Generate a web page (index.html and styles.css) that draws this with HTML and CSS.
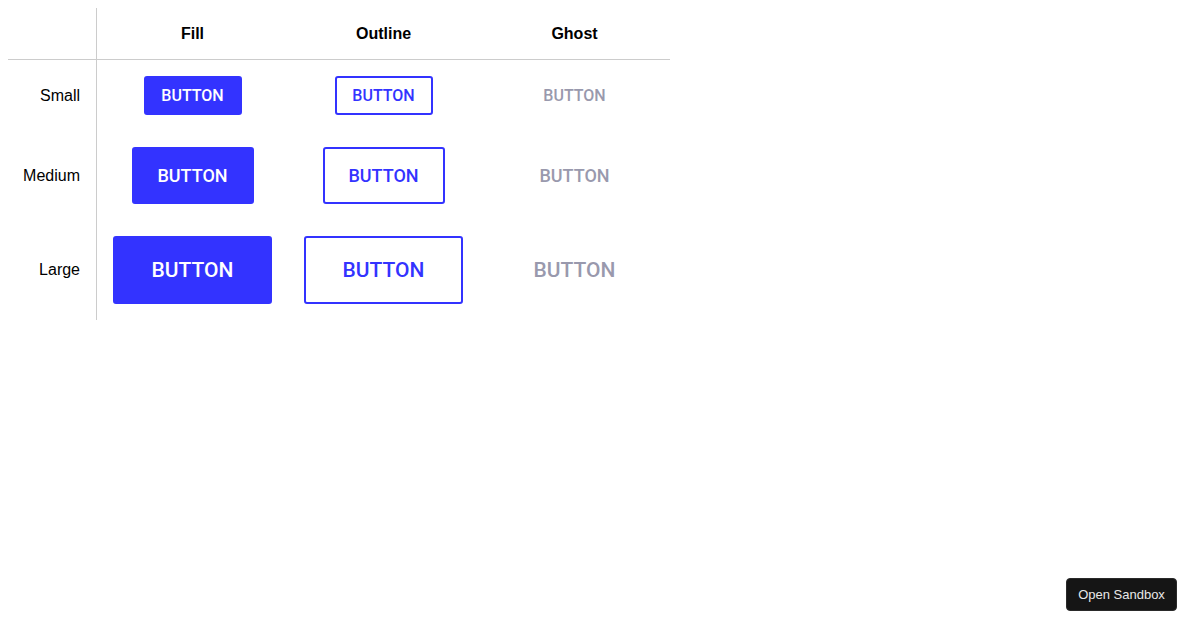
FILE: index.html
```html
<!DOCTYPE html>
<html>
<head>
<meta charset="utf-8">
<link rel="stylesheet" href="styles.css">
</head>
<body>
<div class="matrix">
  <div class="corner"></div>
  <div class="head">Fill</div>
  <div class="head">Outline</div>
  <div class="head">Ghost</div>

  <div class="label row-sm">Small</div>
  <div class="cell row-sm"><button class="btn fill sm">BUTTON</button></div>
  <div class="cell row-sm"><button class="btn outline sm">BUTTON</button></div>
  <div class="cell row-sm"><button class="btn ghost sm">BUTTON</button></div>

  <div class="label row-md">Medium</div>
  <div class="cell row-md"><button class="btn fill md">BUTTON</button></div>
  <div class="cell row-md"><button class="btn outline md">BUTTON</button></div>
  <div class="cell row-md"><button class="btn ghost md">BUTTON</button></div>

  <div class="label row-lg">Large</div>
  <div class="cell row-lg"><button class="btn fill lg">BUTTON</button></div>
  <div class="cell row-lg"><button class="btn outline lg">BUTTON</button></div>
  <div class="cell row-lg"><button class="btn ghost lg">BUTTON</button></div>
</div>
<button class="sandbox">Open Sandbox</button>
</body>
</html>
```

FILE: styles.css
```css
body {
  margin: 8px;
  font-family: "Liberation Sans", Arial, sans-serif;
  background: #fff;
  color: #000;
}
.matrix {
  display: grid;
  grid-template-columns: 89px repeat(3, 191px);
  grid-template-rows: 52px 71px 89px 100px;
  width: 662px;
}
.corner, .head {
  border-bottom: 1px solid #cccccc;
}
.corner, .label {
  border-right: 1px solid #cccccc;
}
.head {
  display: flex;
  align-items: center;
  justify-content: center;
  font-weight: bold;
  font-size: 16px;
}
.label {
  display: flex;
  align-items: center;
  justify-content: flex-end;
  padding-right: 16px;
  font-size: 16px;
}
.cell {
  display: flex;
  align-items: center;
  justify-content: center;
}
.btn {
  font-family: Roboto, "Noto Sans", sans-serif;
  font-weight: 500;
  border: 2px solid transparent;
  border-radius: 3px;
  display: inline-flex;
  align-items: center;
  justify-content: center;
  box-sizing: border-box;
  cursor: pointer;
  padding: 0;
}
.btn.sm { font-size: 16px; width: 98px; height: 39px; }
.btn.md { font-size: 18px; width: 122px; height: 57px; }
.btn.lg { font-size: 21px; width: 159px; height: 68px; }
.btn.fill { background: #3333ff; border-color: #3333ff; color: #fff; }
.btn.outline { background: #fff; border-color: #3333ff; color: #3333ff; }
.btn.ghost { background: transparent; color: #9999ad; }
.sandbox {
  position: fixed;
  right: 23px;
  bottom: 19px;
  width: 111px;
  height: 33px;
  background: #151515;
  color: #e8e8e8;
  border: 1px solid #2a2a2a;
  border-radius: 4px;
  font-family: "Liberation Sans", Arial, sans-serif;
  font-size: 13px;
  padding: 0;
}
```
